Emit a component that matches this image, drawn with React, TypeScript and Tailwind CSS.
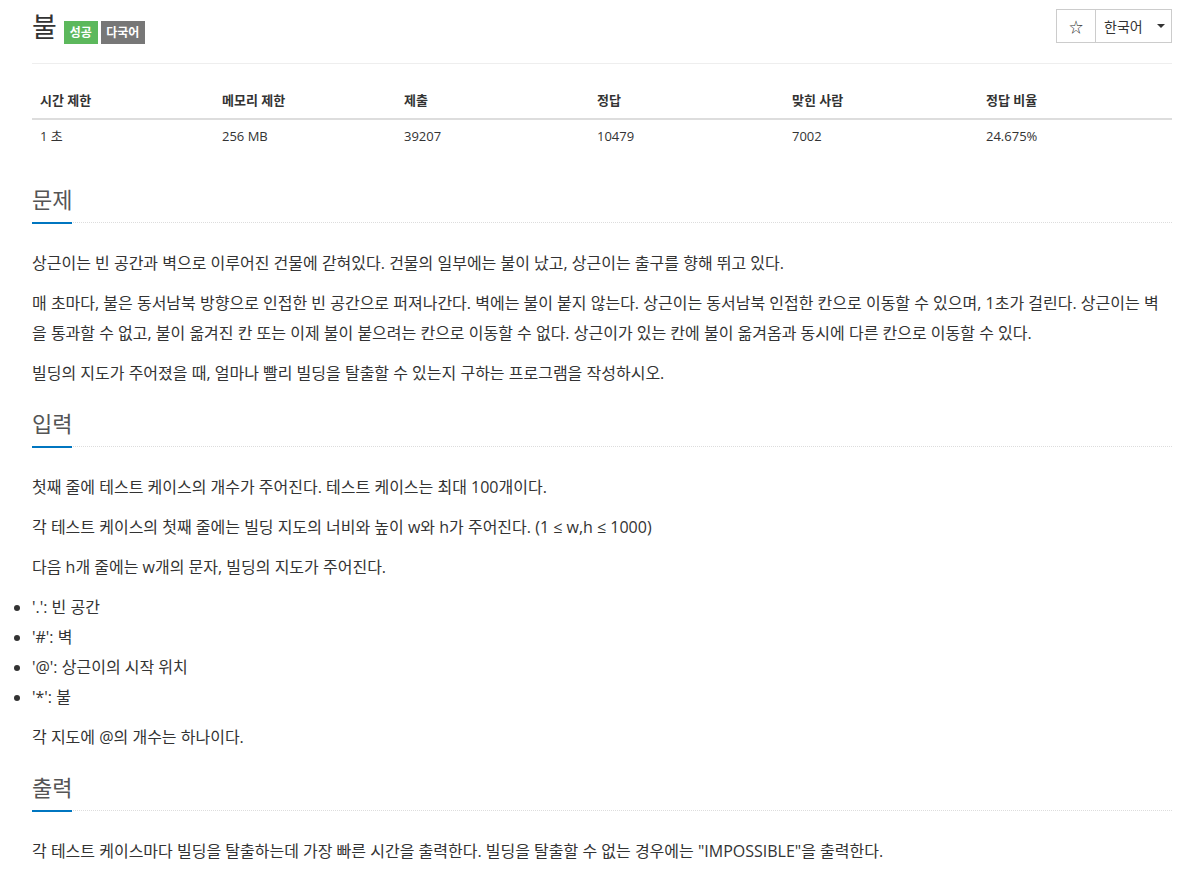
import type { ReactNode } from 'react'

const FONT = { fontFamily: '"Open Sans", "Noto Sans CJK KR", sans-serif' }

const STATS = [
  { label: '시간 제한', value: '1 초', w: 'w-[182px]' },
  { label: '메모리 제한', value: '256 MB', w: 'w-[182px]' },
  { label: '제출', value: '39207', w: 'w-[193px]' },
  { label: '정답', value: '10479', w: 'w-[195px]' },
  { label: '맞힌 사람', value: '7002', w: 'w-[194px]' },
  { label: '정답 비율', value: '24.675%', w: 'w-[194px]' },
]

function Section({ title, first, children }: { title: string; first?: boolean; children: ReactNode }) {
  return (
    <section className={first ? 'mt-[34px]' : 'mt-[23px]'}>
      <div className="flex border-b border-dotted border-[#ddd] mb-[25px]">
        <h2 className="text-[22px] leading-[24px] pb-[11px] text-[#555] border-b-2 border-[#0076c0] -mb-[2px]">
          {title}
        </h2>
      </div>
      <div className="text-[16px] leading-[30px] text-[#333]">{children}</div>
    </section>
  )
}

function P({ children }: { children: ReactNode }) {
  return <p className="mb-[10px]">{children}</p>
}

export default function App() {
  return (
    <div className="bg-white min-h-[872px] text-[#333]" style={FONT}>
      <div className="ml-[32px] w-[1140px]">
        {/* title bar */}
        <div className="flex items-start justify-between h-[64px] border-b border-[#eee] pt-[9px]">
          <div className="flex items-start">
            <h1 className="text-[27px] leading-[36px] text-[#333]">불</h1>
            <span className="ml-[7px] mt-[12px] inline-block w-[34px] h-[23px] text-center leading-[23px] text-[12px] font-bold text-white bg-[#5cb85c]">
              성공
            </span>
            <span className="ml-[3px] mt-[12px] inline-block w-[44px] h-[23px] text-center leading-[23px] text-[12px] font-bold text-white bg-[#777]">
              다국어
            </span>
          </div>
          <div className="flex h-[34px] text-[14px] text-[#333]">
            <button className="w-[40px] h-[34px] border border-[#ccc] bg-white flex items-center justify-center">
              ☆
            </button>
            <button className="w-[76px] h-[34px] border border-l-0 border-[#ccc] bg-white flex items-center pl-[8px]">
              한국어
              <span className="ml-[14px] w-0 h-0 border-x-4 border-t-4 border-x-transparent border-t-[#333]" />
            </button>
          </div>
        </div>

        {/* stats table */}
        <table className="mt-[19px] w-[1140px] text-[13px] text-[#333] border-collapse">
          <thead>
            <tr className="border-b-2 border-[#ddd]">
              {STATS.map((s) => (
                <th key={s.label} className={`${s.w} text-left font-bold px-[8px] py-[8px] leading-[19px]`}>
                  {s.label}
                </th>
              ))}
            </tr>
          </thead>
          <tbody>
            <tr>
              {STATS.map((s) => (
                <td key={s.label} className="px-[8px] py-[7px] leading-[19px]">
                  {s.value}
                </td>
              ))}
            </tr>
          </tbody>
        </table>

        <Section title="문제" first>
          <P>상근이는 빈 공간과 벽으로 이루어진 건물에 갇혀있다. 건물의 일부에는 불이 났고, 상근이는 출구를 향해 뛰고 있다.</P>
          <P>
            매 초마다, 불은 동서남북 방향으로 인접한 빈 공간으로 퍼져나간다. 벽에는 불이 붙지 않는다. 상근이는 동서남북 인접한 칸으로 이동할 수 있으며, 1초가 걸린다. 상근이는 벽을 통과할 수 없고, 불이 옮겨진 칸 또는 이제 불이 붙으려는 칸으로 이동할 수 없다. 상근이가 있는 칸에 불이 옮겨옴과 동시에 다른 칸으로 이동할 수 있다.
          </P>
          <P>빌딩의 지도가 주어졌을 때, 얼마나 빨리 빌딩을 탈출할 수 있는지 구하는 프로그램을 작성하시오.</P>
        </Section>

        <Section title="입력">
          <P>첫째 줄에 테스트 케이스의 개수가 주어진다. 테스트 케이스는 최대 100개이다.</P>
          <P>각 테스트 케이스의 첫째 줄에는 빌딩 지도의 너비와 높이 w와 h가 주어진다. (1 ≤ w,h ≤ 1000)</P>
          <P>다음 h개 줄에는 w개의 문자, 빌딩의 지도가 주어진다.</P>
          <ul className="list-disc mb-[10px]">
            <li>'.': 빈 공간</li>
            <li>'#': 벽</li>
            <li>'@': 상근이의 시작 위치</li>
            <li>'*': 불</li>
          </ul>
          <P>각 지도에 @의 개수는 하나이다.</P>
        </Section>

        <Section title="출력">
          <P>각 테스트 케이스마다 빌딩을 탈출하는데 가장 빠른 시간을 출력한다. 빌딩을 탈출할 수 없는 경우에는 "IMPOSSIBLE"을 출력한다.</P>
        </Section>
      </div>
    </div>
  )
}
